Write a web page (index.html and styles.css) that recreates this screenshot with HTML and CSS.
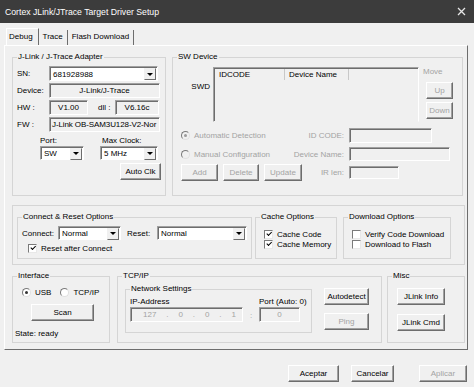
FILE: index.html
```html
<!DOCTYPE html>
<html lang="en">

<head>
  <meta charset="UTF-8">
  <meta name="viewport" content="width=device-width, initial-scale=1.0">
  <title>Cortex JLink/JTrace Target Driver Setup</title>
  <link rel="stylesheet" href="styles.css">
</head>

<body>
  <div class="window">
    <header class="titlebar">
      <span>Cortex JLink/JTrace Target Driver Setup</span>
      <svg class="close" width="9" height="9" viewBox="0 0 9 9"><path d="M1 1L8 8M8 1L1 8" stroke="#e6e6e6" stroke-width="1.3"/></svg>
    </header>

    <nav class="tabs">
      <span class="tab active">Debug</span>
      <span class="tab">Trace</span>
      <span class="tab">Flash Download</span>
    </nav>

    <main class="panel">
      <div class="row-top">
        <fieldset class="adapter">
          <legend>J-Link / J-Trace Adapter</legend>
          <div class="line"><span class="lbl">SN:</span><div class="combo w-sn"><span>681928988</span><i class="drop"></i></div></div>
          <div class="line"><span class="lbl">Device:</span><div class="field center w-full">J-Link/J-Trace</div></div>
          <div class="line"><span class="lbl">HW :</span><div class="field center w-hw">V1.00</div><span class="dll">dll :</span><div class="field center w-dll">V6.16c</div></div>
          <div class="line"><span class="lbl">FW :</span><div class="field fw w-full">J-Link OB-SAM3U128-V2-Nor</div></div>
          <div class="clock">
            <div class="pick port"><span>Port:</span><div class="combo"><span>SW</span><i class="drop"></i></div></div>
            <div class="pick maxclk"><span>Max Clock:</span><div class="combo"><span>5 MHz</span><i class="drop"></i></div></div>
          </div>
          <button class="btn autoclk">Auto Clk</button>
        </fieldset>

        <fieldset class="swdevice">
          <legend>SW Device</legend>
          <div class="sw-top">
            <span class="swd">SWD</span>
            <div class="listview">
              <div class="lv-head">
                <span class="col-id">IDCODE</span>
                <span class="col-name">Device Name</span>
                <span class="col-rest"></span>
              </div>
            </div>
            <div class="move">
              <span class="off">Move</span>
              <button class="btn off up">Up</button>
              <button class="btn off down">Down</button>
            </div>
          </div>
          <div class="swrow row-a">
            <div class="swleft">
              <span class="opt off"><i class="radio on"></i>Automatic Detection</span>
              <span class="flabel off">ID CODE:</span>
            </div>
            <div class="field w-id"></div>
          </div>
          <div class="swrow row-b">
            <div class="swleft">
              <span class="opt off"><i class="radio"></i>Manual Configuration</span>
              <span class="flabel off">Device Name:</span>
            </div>
            <div class="field w-dn"></div>
          </div>
          <div class="swrow row-c">
            <div class="swleft">
              <button class="btn off w-add">Add</button>
              <button class="btn off w-del">Delete</button>
              <button class="btn off w-upd">Update</button>
              <span class="flabel off">IR len:</span>
            </div>
            <div class="field w-ir"></div>
          </div>
        </fieldset>
      </div>

      <div class="frame">
        <fieldset class="connect">
          <legend>Connect &amp; Reset Options</legend>
          <div class="conn-row">
            <span class="conn-lbl">Connect:</span>
            <div class="combo w-conn"><span>Normal</span><i class="drop"></i></div>
            <span class="reset-lbl">Reset:</span>
            <div class="combo w-reset"><span>Normal</span><i class="drop"></i></div>
          </div>
          <div class="check-row indent"><i class="check on"></i>Reset after Connect</div>
        </fieldset>
        <fieldset class="cache">
          <legend>Cache Options</legend>
          <div class="check-row first"><i class="check on"></i>Cache Code</div>
          <div class="check-row"><i class="check on"></i>Cache Memory</div>
        </fieldset>
        <fieldset class="download">
          <legend>Download Options</legend>
          <div class="check-row first"><i class="check"></i>Verify Code Download</div>
          <div class="check-row"><i class="check"></i>Download to Flash</div>
        </fieldset>
      </div>

      <div class="row-bottom">
        <fieldset class="iface">
          <legend>Interface</legend>
          <div class="radio-row">
            <span class="opt"><i class="radio on"></i>USB</span>
            <span class="opt tcp"><i class="radio"></i>TCP/IP</span>
          </div>
          <button class="btn scan">Scan</button>
          <div class="state">State: ready</div>
        </fieldset>

        <fieldset class="tcpip">
          <legend>TCP/IP</legend>
          <div class="tcp-body">
            <fieldset class="netset">
              <legend>Network Settings</legend>
              <div class="net-row">
                <div class="net-col">
                  <span>IP-Address</span>
                  <div class="field ip">
                    <span>127</span><span>.</span><span>0</span><span>.</span><span>0</span><span>.</span><span>1</span>
                  </div>
                </div>
                <span class="colon">:</span>
                <div class="net-col port-col">
                  <span>Port (Auto: 0)</span>
                  <div class="field center off w-port">0</div>
                </div>
              </div>
            </fieldset>
            <div class="tcp-btns">
              <button class="btn w-auto">Autodetect</button>
              <button class="btn off w-auto ping">Ping</button>
            </div>
          </div>
        </fieldset>

        <fieldset class="misc">
          <legend>Misc</legend>
          <button class="btn w-jl">JLink Info</button>
          <button class="btn w-jl jcmd">JLink Cmd</button>
        </fieldset>
      </div>
    </main>

    <footer class="footer">
      <button class="btn w-ok">Aceptar</button>
      <button class="btn w-cancel">Cancelar</button>
      <button class="btn off w-apply">Aplicar</button>
    </footer>
  </div>
</body>

</html>
```

FILE: styles.css
```css
* {
  box-sizing: border-box;
}

body {
  margin: 0;
  background-color: #f0f0f0;
  color: #000;
  font-family: 'Liberation Sans', Arial, sans-serif;
  font-size: 8px;
  white-space: nowrap;
}

.window {
  width: 474px;
  height: 387px;
  overflow: hidden;
}

.titlebar {
  height: 23px;
  background-color: #3c3c3c;
  color: #fff;
  font-size: 8.7px;
  display: flex;
  align-items: center;
  justify-content: space-between;
  padding: 0 8px 0 5px;
}

/* tabs */

.tabs {
  display: flex;
  align-items: flex-end;
  height: 17px;
  margin: 5px 0 0 6px;
}

.tab {
  height: 15px;
  line-height: 14px;
  padding: 0 4px;
  border-right: 1px solid #6d6d6d;
}

.tab.active {
  height: 17px;
  line-height: 15px;
  padding: 0 5px 0 2px;
  border-left: 1px solid #fff;
  border-top: 1px solid #fff;
}

.panel {
  margin-left: 4px;
  width: 464px;
  height: 305px;
  border: 1px solid;
  border-color: #fff #6d6d6d #6d6d6d #fff;
  padding: 6px 2px 0 7px;
}

/* group boxes */

fieldset {
  --pad: 4px;
  margin: 0;
  min-width: 0;
  padding: 0 var(--pad);
  border: 1px solid #d5d5d5;
}

legend {
  padding: 0 1px;
  margin-left: calc(4px - var(--pad));
  line-height: 10px;
}

.off {
  color: #a3a3a3;
}

/* controls */

.btn {
  display: block;
  height: 17px;
  padding: 0;
  font: inherit;
  color: #000;
  background-color: #f0f0f0;
  border: 1px solid;
  border-color: #fff #6d6d6d #6d6d6d #fff;
  box-shadow: inset -1px -1px #a0a0a0;
  text-align: center;
}

.btn.off {
  color: #a3a3a3;
}

.combo,
.field {
  height: 15px;
  border: 1px solid;
  border-color: #a0a0a0 #fff #fff #a0a0a0;
  box-shadow: inset 1px 1px #6d6d6d;
}

.combo {
  display: flex;
  align-items: center;
  justify-content: space-between;
  background-color: #fff;
  padding: 1px 1px 0 3px;
}

.drop {
  width: 12px;
  height: 12px;
  background-color: #f0f0f0;
  border: 1px solid;
  border-color: #f0f0f0 #6d6d6d #6d6d6d #f0f0f0;
  display: flex;
  align-items: center;
  justify-content: center;
}

.drop::after {
  content: '';
  border-left: 3px solid transparent;
  border-right: 3px solid transparent;
  border-top: 3px solid #000;
}

.field {
  background-color: #f0f0f0;
  padding: 1px 0 0 3px;
  line-height: 12px;
  overflow: hidden;
}

.field.center {
  text-align: center;
  padding-left: 0;
}

.field.fw {
  padding-left: 2px;
  letter-spacing: -0.1px;
}

.radio {
  display: inline-block;
  width: 9px;
  height: 9px;
  border-radius: 50%;
  border: 1px solid;
  border-color: #7a7a7a #e0e0e0 #e0e0e0 #7a7a7a;
  background-color: #fff;
  margin-right: 4px;
  position: relative;
}

.radio.on::after {
  content: '';
  position: absolute;
  left: 2px;
  top: 2px;
  width: 3px;
  height: 3px;
  border-radius: 50%;
  background-color: #333;
}

.off .radio {
  background-color: #f0f0f0;
}

.off .radio.on::after {
  background-color: #9a9a9a;
}

.check {
  display: inline-block;
  width: 9px;
  height: 9px;
  border: 1px solid;
  border-color: #7a7a7a #e8e8e8 #e8e8e8 #7a7a7a;
  background-color: #fff;
  margin-right: 4px;
  position: relative;
}

.check.on::after {
  content: '';
  position: absolute;
  left: 1px;
  top: 0;
  width: 4px;
  height: 2px;
  border-left: 1.5px solid #000;
  border-bottom: 1.5px solid #000;
  transform: rotate(-45deg) translate(0, 1px);
}

.opt {
  display: flex;
  align-items: center;
}

/* adapter */

.row-top {
  display: flex;
  height: 144px;
}

.adapter {
  width: 154px;
}

.line {
  display: flex;
  align-items: center;
  height: 15px;
  margin-top: 2px;
}

.adapter legend + .line {
  margin-top: 4px;
}

.lbl {
  width: 32px;
}

.w-sn {
  width: 109px;
}

.w-full {
  width: 111px;
}

.w-hw {
  width: 39px;
}

.dll {
  width: 17px;
  margin-left: 10px;
}

.w-dll {
  width: 44px;
}

.clock {
  display: flex;
  margin: 4px 0 0 23px;
}

.pick {
  display: flex;
  flex-direction: column;
}

.pick span {
  line-height: 10px;
}

.pick .combo {
  height: 14px;
}

.port .combo {
  width: 44px;
}

.maxclk {
  margin-left: 16px;
}

.maxclk > span {
  padding-left: 2px;
}

.maxclk .combo {
  width: 58px;
}

.autoclk {
  width: 41px;
  margin: 3px 0 0 auto;
}

/* sw device */

.swdevice {
  --pad: 8px;
  width: 291px;
  margin-left: 6px;
}

.sw-top {
  display: flex;
  margin-top: 5px;
}

.swd {
  width: 29px;
  text-align: right;
  margin-top: 15px;
  line-height: 10px;
}

.listview {
  width: 206px;
  height: 55px;
  margin-left: 3px;
  border: 1px solid;
  border-color: #a0a0a0 #fff #f0f0f0 #a0a0a0;
  box-shadow: inset 1px 1px #6d6d6d;
  padding: 1px 0 0 1px;
}

.lv-head {
  display: flex;
  height: 11px;
  line-height: 11px;
}

.lv-head span {
  border-right: 1px solid #c8c8c8;
  padding-left: 4px;
}

.col-id {
  width: 70px;
}

.col-name {
  width: 64px;
}

.col-rest {
  flex: 1;
  border-right: none !important;
}

.move {
  width: 31px;
  margin-left: 4px;
  display: flex;
  flex-direction: column;
}

.move span {
  line-height: 10px;
}

.move .btn {
  width: 27px;
  height: 17px;
  margin-left: 3px;
}

.move .up {
  margin-top: 5px;
}

.move .down {
  margin-top: 3px;
}

.swrow {
  display: flex;
  align-items: center;
}

.swleft {
  width: 168px;
  display: flex;
  align-items: center;
}

.flabel {
  margin-left: auto;
  padding-right: 5px;
}

.row-a {
  margin-top: 6px;
}

.row-a .field {
  height: 15px;
}

.row-b {
  margin-top: 4px;
}

.row-b .field {
  height: 14px;
}

.row-c {
  margin-top: 3px;
}

.row-c .field {
  height: 13px;
}

.w-id {
  width: 83px;
}

.w-dn {
  width: 101px;
}

.w-ir {
  width: 50px;
}

.w-add {
  width: 37px;
}

.w-del {
  width: 36px;
  margin-left: 5px;
}

.w-upd {
  width: 38px;
  margin-left: 5px;
}

/* connect / cache / download */

.frame {
  display: flex;
  height: 60px;
  margin-top: 9px;
  padding: 6px 4px 5px 4px;
  border: 1px solid #d5d5d5;
}

.connect {
  width: 235px;
}

.conn-row {
  display: flex;
  align-items: center;
  margin-top: 4px;
}

.conn-lbl {
  width: 36px;
}

.conn-row .combo {
  height: 14px;
}

.w-conn {
  width: 63px;
}

.reset-lbl {
  width: 30px;
  margin-left: 6px;
}

.w-reset {
  width: 90px;
}

.check-row {
  display: flex;
  align-items: center;
  height: 10px;
}

.check-row.indent {
  margin: 3px 0 0 6px;
}

.check-row.first {
  margin-top: 7px;
}

.cache {
  --pad: 8px;
  width: 82px;
  margin-left: 3px;
  padding-right: 2px;
}

.download {
  --pad: 8px;
  width: 108px;
  margin-left: 6px;
  padding-right: 2px;
}

/* interface / tcp / misc */

.row-bottom {
  display: flex;
  height: 72px;
  margin-top: 6px;
}

.iface {
  --pad: 2px;
  width: 98px;
}

.radio-row {
  display: flex;
  margin: 6px 0 0 7px;
  height: 10px;
}

.radio-row .tcp {
  margin-left: 9px;
}

.scan {
  width: 63px;
  margin: 7px 0 0 16px;
}

.state {
  margin-top: 8px;
  line-height: 10px;
}

.tcpip {
  --pad: 7px;
  width: 265px;
  margin-left: 7px;
}

.tcp-body {
  display: flex;
}

.netset {
  width: 187px;
  height: 49px;
  margin-top: 3px;
}

.net-row {
  display: flex;
  align-items: flex-end;
  margin-top: 3px;
}

.net-col {
  display: flex;
  flex-direction: column;
}

.net-col > span {
  line-height: 10px;
}

.ip {
  width: 113px;
  display: flex;
  justify-content: space-between;
  padding: 1px 6px 0 12px;
  color: #a3a3a3;
}

.colon {
  width: 16px;
  text-align: center;
  line-height: 12px;
  color: #a3a3a3;
}

.port-col > span {
  text-align: center;
}

.w-port {
  width: 41px;
}

.tcp-btns {
  margin-left: 12px;
}

.w-auto {
  width: 45px;
  margin-top: 7px;
}

.tcp-btns .ping {
  margin-top: 8px;
}

.misc {
  --pad: 9px;
  width: 78px;
  margin-left: 5px;
}

.w-jl {
  width: 48px;
  margin-top: 7px;
}

.misc .jcmd {
  margin-top: 9px;
}

/* dialog buttons */

.footer {
  display: flex;
  justify-content: flex-end;
  margin-top: 15px;
  padding-right: 7px;
}

.w-ok {
  width: 51px;
}

.w-cancel {
  width: 43px;
  margin-left: 12px;
}

.w-apply {
  width: 48px;
  margin-left: 25px;
}
```
